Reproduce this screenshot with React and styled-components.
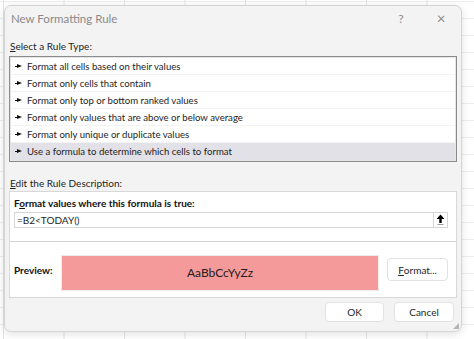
import React from 'react';
import styled, { createGlobalStyle } from 'styled-components';

const GlobalStyle = createGlobalStyle`
  html, body {
    margin: 0;
    padding: 0;
  }
  body {
    width: 474px;
    height: 339px;
    overflow: hidden;
    font-family: 'Lato', 'Noto Sans', sans-serif;
    background-color: #ffffff;
    background-image:
      linear-gradient(90deg, transparent 59.5px, #e4e4e4 59.5px),
      linear-gradient(180deg, transparent 16px, #ededed 16px);
    background-size: 60.5px 100%, 100% 17px;
    background-position: 4px 0, 0 2px;
  }
`;

const Page = styled.div`
  padding: 5px 0 0 4px;
`;

const Dialog = styled.div`
  width: 456px;
  height: 325px;
  background: #f3f3f3;
  border: 1px solid #d4d4d4;
  border-radius: 7px;
  box-shadow: 0 2px 8px rgba(0, 0, 0, 0.12);
  display: flex;
  flex-direction: column;
  position: relative;
`;

const TitleBar = styled.div`
  height: 24px;
  display: flex;
  align-items: center;
  padding: 0 0 0 6px;
`;

const Title = styled.div`
  flex: 1;
  font-size: 11.5px;
  color: #8a8a8a;
`;

const TitleButton = styled.div`
  width: 40px;
  display: flex;
  align-items: center;
  justify-content: center;
  color: #8c8c8c;
  font-size: ${p => p.$size || 12}px;
`;

const Body = styled.div`
  padding: 0 4px 0 4px;
  display: flex;
  flex-direction: column;
`;

const SectionLabel = styled.div`
  font-size: 10px;
  color: #1e1e1e;
  height: 14px;
  line-height: 14px;
  margin: ${p => p.$margin || '0'};
  padding-left: 1px;
`;

const Key = styled.span`
  text-decoration: underline;
  text-underline-offset: 1px;
`;

const RuleList = styled.div`
  margin-top: 3px;
  height: 106px;
  box-sizing: border-box;
  background: #ffffff;
  border: 1px solid #8a8a8a;
  box-shadow: inset 0 0 0 1px #e6e6e6;
  padding: 1px 1px;
  display: flex;
  flex-direction: column;
`;

const RuleRow = styled.div`
  height: 17px;
  display: flex;
  align-items: center;
  gap: 5px;
  padding-left: 4px;
  font-size: 9.6px;
  color: #1e1e1e;
  background: ${p => (p.$selected ? '#e1e1e7' : 'transparent')};
  border-bottom: 1px solid ${p => (p.$selected ? 'transparent' : '#f3f3f3')};
  box-sizing: border-box;
`;

const Pointer = styled.span`
  display: inline-block;
  width: 7px;
  height: 5px;
  position: relative;
  &::before {
    content: '';
    position: absolute;
    left: 0;
    top: 2px;
    width: 3px;
    height: 1px;
    background: #111;
  }
  &::after {
    content: '';
    position: absolute;
    left: 2px;
    top: 0;
    border-left: 5px solid #111;
    border-top: 2.5px solid transparent;
    border-bottom: 2.5px solid transparent;
  }
`;

const Panel = styled.div`
  margin-top: 1px;
  height: 107px;
  box-sizing: border-box;
  background: #ffffff;
  border: 1px solid #d8d8d8;
  display: flex;
  flex-direction: column;
`;

const PanelTop = styled.div`
  padding: 4px 8px 0 4px;
  height: 50px;
  box-sizing: border-box;
  border-bottom: 1px solid #d4d4d4;
`;

const BoldLabel = styled.div`
  font-size: 10px;
  font-weight: 700;
  color: #111;
  height: 14px;
  line-height: 14px;
`;

const FormulaBox = styled.div`
  margin-top: 2px;
  height: 16px;
  box-sizing: border-box;
  border: 1px solid #d6d6d6;
  display: flex;
  align-items: center;
  justify-content: space-between;
  padding-left: 2px;
  font-size: 10px;
  color: #1e1e1e;
`;

const CollapseButton = styled.div`
  width: 15px;
  height: 16px;
  margin-top: -1px;
  margin-right: -1px;
  box-sizing: border-box;
  border: 1px solid #d6d6d6;
  display: flex;
  align-items: center;
  justify-content: center;
  flex-direction: column;
`;

const PreviewRow = styled.div`
  flex: 1;
  display: flex;
  align-items: center;
  padding: 0 8px 0 4px;
`;

const PreviewLabel = styled(BoldLabel)`
  width: 47px;
`;

const Swatch = styled.div`
  width: 317px;
  height: 34px;
  margin-top: 6px;
  background: #f49a9a;
  border: 1px solid #ececec;
  display: flex;
  align-items: center;
  justify-content: center;
  font-size: 12px;
  color: #2a1a1a;
`;

const Button = styled.div`
  width: ${p => p.$width || 59}px;
  height: ${p => p.$height || 20}px;
  box-sizing: border-box;
  background: #ffffff;
  border: 1px solid #e2e2e2;
  border-radius: 4px;
  display: flex;
  align-items: center;
  justify-content: center;
  font-size: 10px;
  color: #1e1e1e;
  margin-left: ${p => p.$ml || 0}px;
`;

const Footer = styled.div`
  display: flex;
  justify-content: flex-end;
  gap: 10px;
  padding: 4px 3px 0 0;
`;

const Grip = styled.div`
  position: absolute;
  right: 2px;
  bottom: 2px;
  width: 6px;
  height: 6px;
  background-image: radial-gradient(circle, #b0b0b0 0.7px, transparent 0.8px);
  background-size: 2px 2px;
  clip-path: polygon(100% 0, 100% 100%, 0 100%);
`;

const rules = [
  'Format all cells based on their values',
  'Format only cells that contain',
  'Format only top or bottom ranked values',
  'Format only values that are above or below average',
  'Format only unique or duplicate values',
  'Use a formula to determine which cells to format',
];

export default function App() {
  return (
    <Page>
      <GlobalStyle />
      <Dialog>
        <TitleBar>
          <Title>New Formatting Rule</Title>
          <TitleButton $size={12}>?</TitleButton>
          <TitleButton $size={15}>×</TitleButton>
        </TitleBar>
        <Body>
          <SectionLabel $margin="9px 0 0 0"><Key>S</Key>elect a Rule Type:</SectionLabel>
          <RuleList>
            {rules.map((r, i) => (
              <RuleRow key={r} $selected={i === rules.length - 1}>
                <Pointer />
                {r}
              </RuleRow>
            ))}
          </RuleList>
          <SectionLabel $margin="14px 0 0 0"><Key>E</Key>dit the Rule Description:</SectionLabel>
          <Panel>
            <PanelTop>
              <BoldLabel>F<Key>o</Key>rmat values where this formula is true:</BoldLabel>
              <FormulaBox>
                =B2&lt;TODAY()
                <CollapseButton>
                  <svg width="9" height="11" viewBox="0 0 9 11">
                    <path d="M4.5 0.5 L8.5 5 L5.7 5 L5.7 9 L3.3 9 L3.3 5 L0.5 5 Z" fill="#000" />
                    <rect x="1.5" y="10" width="6" height="1" fill="#9a9a9a" />
                  </svg>
                </CollapseButton>
              </FormulaBox>
            </PanelTop>
            <PreviewRow>
              <PreviewLabel>Preview:</PreviewLabel>
              <Swatch>AaBbCcYyZz</Swatch>
              <Button $width={61} $height={23} $ml={8}><Key>F</Key>ormat...</Button>
            </PreviewRow>
          </Panel>
          <Footer>
            <Button>OK</Button>
            <Button $width={60}>Cancel</Button>
          </Footer>
        </Body>
        <Grip />
      </Dialog>
    </Page>
  );
}
